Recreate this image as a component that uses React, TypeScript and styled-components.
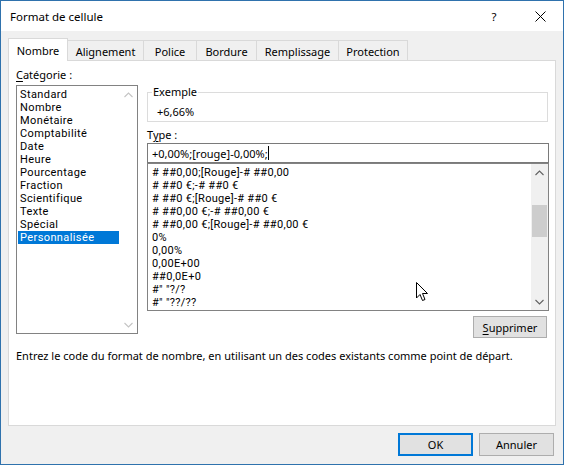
import React from 'react';
import styled, { createGlobalStyle } from 'styled-components';

const GlobalStyle = createGlobalStyle`
  html, body {
    margin: 0;
    padding: 0;
    background: #ffffff;
  }
  body {
    font-family: "Segoe UI", "Noto Sans", sans-serif;
    font-size: 11px;
    color: #000000;
  }
`;

const Window = styled.div`
  width: 564px;
  height: 465px;
  box-sizing: border-box;
  border: 1px solid #2f72ad;
  background: #f0f0f0;
  display: flex;
  flex-direction: column;
`;

const TitleBar = styled.div`
  height: 30px;
  background: #ffffff;
  display: flex;
  align-items: center;
  padding-left: 9px;
  font-size: 11.5px;
`;

const TitleText = styled.div`
  flex: 1;
`;

const TitleButton = styled.div<{ $w: number }>`
  width: ${p => p.$w}px;
  height: 30px;
  display: flex;
  align-items: center;
  justify-content: center;
  color: #000;
`;

const TabRow = styled.div`
  display: flex;
  align-items: flex-end;
  height: 22px;
  margin: 7px 0 0 7px;
`;

const Tab = styled.div<{ $w: number; $active?: boolean }>`
  position: relative;
  z-index: ${p => (p.$active ? 2 : 1)};
  box-sizing: border-box;
  width: ${p => p.$w}px;
  height: ${p => (p.$active ? 23 : 20)}px;
  margin-bottom: ${p => (p.$active ? -1 : 0)}px;
  margin-left: -1px;
  border: 1px solid #d9d9d9;
  border-bottom: none;
  background: ${p => (p.$active ? '#ffffff' : '#f0f0f0')};
  display: flex;
  align-items: center;
  justify-content: center;
  padding-top: ${p => (p.$active ? 0 : 1)}px;
  &:first-child {
    margin-left: 0;
  }
`;

const Panel = styled.div`
  box-sizing: border-box;
  height: 366px;
  margin: 0 7px 0 7px;
  background: #ffffff;
  border: 1px solid #d9d9d9;
  padding: 7px 0 0 7px;
`;

const Columns = styled.div`
  display: grid;
  grid-template-columns: 122px 402px;
  column-gap: 9px;
`;

const Column = styled.div`
  display: flex;
  flex-direction: column;
`;

const Label = styled.div<{ $top?: number }>`
  line-height: 14px;
  height: 14px;
  margin-top: ${p => p.$top ?? 0}px;
`;

const Key = styled.span`
  text-decoration: underline;
  text-underline-offset: 2px;
`;

const CategoryBox = styled.div`
  box-sizing: border-box;
  margin-top: 3px;
  height: 249px;
  border: 1px solid #828282;
  display: flex;
`;

const CategoryItems = styled.div`
  flex: 1;
  padding-top: 2px;
`;

const Item = styled.div<{ $selected?: boolean }>`
  height: 13px;
  line-height: 13px;
  margin: 0 1px;
  padding-left: 2px;
  font-family: Roboto, "Noto Sans", sans-serif;
  font-size: 11px;
  letter-spacing: 0.4px;
  white-space: nowrap;
  background: ${p => (p.$selected ? '#0078d7' : 'transparent')};
  color: ${p => (p.$selected ? '#ffffff' : '#000000')};
`;

const ScrollBar = styled.div<{ $disabled?: boolean }>`
  width: 17px;
  display: flex;
  flex-direction: column;
  background: ${p => (p.$disabled ? '#ffffff' : '#f0f0f0')};
`;

const ScrollButton = styled.div`
  height: 17px;
  display: flex;
  align-items: center;
  justify-content: center;
`;

const ScrollTrack = styled.div`
  flex: 1;
  padding: 0 1px;
`;

const ScrollThumb = styled.div<{ $top: number; $h: number }>`
  margin-top: ${p => p.$top}px;
  height: ${p => p.$h}px;
  background: #cdcdcd;
`;

const SampleGroup = styled.fieldset`
  margin: 17px 1px 0 0;
  padding: 0 0 0 4px;
  border: 1px solid #dcdcdc;
  min-width: 0;
`;

const Legend = styled.legend`
  padding: 0 1px;
  line-height: 14px;
`;

const Sample = styled.div`
  padding: 6px 0 2px 5px;
  line-height: 14px;
`;

const TypeInput = styled.div`
  box-sizing: border-box;
  margin-top: 1px;
  height: 20px;
  border: 1px solid #7a7a7a;
  padding-left: 4px;
  display: flex;
  align-items: center;
`;

const Caret = styled.span`
  display: inline-block;
  width: 1px;
  height: 14px;
  background: #000;
  vertical-align: middle;
`;

const FormatBox = styled.div`
  position: relative;
  box-sizing: border-box;
  height: 148px;
  border: 1px solid #828282;
  display: flex;
`;

const FormatItems = styled.div`
  flex: 1;
  padding: 2px 0 0 4px;
  overflow: hidden;
`;

const FormatLine = styled.div`
  height: 13px;
  line-height: 13px;
  font-family: Roboto, "Noto Sans", sans-serif;
  font-size: 11px;
  letter-spacing: 0.3px;
  white-space: nowrap;
`;

const Pointer = styled.svg`
  position: absolute;
  left: 268px;
  top: 118px;
`;

const ButtonRow = styled.div<{ $top: number; $right: number }>`
  display: flex;
  justify-content: flex-end;
  gap: 6px;
  margin-top: ${p => p.$top}px;
  margin-right: ${p => p.$right}px;
`;

const Button = styled.div<{ $w: number; $h: number; $default?: boolean }>`
  box-sizing: border-box;
  width: ${p => p.$w}px;
  height: ${p => p.$h}px;
  background: #e1e1e1;
  border: ${p => (p.$default ? '2px solid #0078d7' : '1px solid #adadad')};
  display: flex;
  align-items: center;
  justify-content: center;
`;

const Help = styled.div`
  margin-top: 11px;
  line-height: 14px;
`;

const Chevron: React.FC<{ down?: boolean; color: string }> = ({ down, color }) => (
  <svg width="9" height="6" viewBox="0 0 9 6">
    <path
      d={down ? 'M0.5 1 L4.5 5 L8.5 1' : 'M0.5 5 L4.5 1 L8.5 5'}
      fill="none"
      stroke={color}
      strokeWidth="1.1"
    />
  </svg>
);

const tabs = [
  { name: 'Nombre', w: 60, active: true },
  { name: 'Alignement', w: 77 },
  { name: 'Police', w: 54 },
  { name: 'Bordure', w: 61 },
  { name: 'Remplissage', w: 83 },
  { name: 'Protection', w: 70 },
];

const categories = [
  'Standard',
  'Nombre',
  'Monétaire',
  'Comptabilité',
  'Date',
  'Heure',
  'Pourcentage',
  'Fraction',
  'Scientifique',
  'Texte',
  'Spécial',
  'Personnalisée',
];

const formats = [
  '# ##0,00;[Rouge]-# ##0,00',
  '# ##0 €;-# ##0 €',
  '# ##0 €;[Rouge]-# ##0 €',
  '# ##0,00 €;-# ##0,00 €',
  '# ##0,00 €;[Rouge]-# ##0,00 €',
  '0%',
  '0,00%',
  '0,00E+00',
  '##0,0E+0',
  '#" "?/?',
  '#" "??/??',
];

const App: React.FC = () => {
  return (
    <>
      <GlobalStyle />
      <Window>
        <TitleBar>
          <TitleText>Format de cellule</TitleText>
          <TitleButton $w={46}>?</TitleButton>
          <TitleButton $w={46}>
            <svg width="11" height="11" viewBox="0 0 11 11">
              <path d="M0.5 0.5 L10.5 10.5 M10.5 0.5 L0.5 10.5" stroke="#000" strokeWidth="1" />
            </svg>
          </TitleButton>
        </TitleBar>

        <TabRow>
          {tabs.map(t => (
            <Tab key={t.name} $w={t.w} $active={t.active}>
              {t.name}
            </Tab>
          ))}
        </TabRow>

        <Panel>
          <Columns>
            <Column>
              <Label>
                <Key>C</Key>atégorie :
              </Label>
              <CategoryBox>
                <CategoryItems>
                  {categories.map(c => (
                    <Item key={c} $selected={c === 'Personnalisée'}>
                      {c}
                    </Item>
                  ))}
                </CategoryItems>
                <ScrollBar $disabled>
                  <ScrollButton>
                    <Chevron color="#c4c4c4" />
                  </ScrollButton>
                  <ScrollTrack />
                  <ScrollButton>
                    <Chevron down color="#c4c4c4" />
                  </ScrollButton>
                </ScrollBar>
              </CategoryBox>
            </Column>

            <Column>
              <SampleGroup>
                <Legend>Exemple</Legend>
                <Sample>+6,66%</Sample>
              </SampleGroup>
              <Label $top={6}>
                T<Key>y</Key>pe :
              </Label>
              <TypeInput>
                +0,00%;[rouge]-0,00%;
                <Caret />
              </TypeInput>
              <FormatBox>
                <FormatItems>
                  {formats.map(f => (
                    <FormatLine key={f}>{f}</FormatLine>
                  ))}
                </FormatItems>
                <ScrollBar>
                  <ScrollButton>
                    <Chevron color="#606060" />
                  </ScrollButton>
                  <ScrollTrack>
                    <ScrollThumb $top={24} $h={32} />
                  </ScrollTrack>
                  <ScrollButton>
                    <Chevron down color="#606060" />
                  </ScrollButton>
                </ScrollBar>
                <Pointer width="13" height="20" viewBox="0 0 13 20">
                  <path
                    d="M0.5 0.5 L0.5 16 L4 12.5 L6.5 18.5 L9 17.5 L6.5 11.5 L11.5 11.5 Z"
                    fill="#ffffff"
                    stroke="#000000"
                    strokeWidth="1"
                    strokeLinejoin="miter"
                  />
                </Pointer>
              </FormatBox>
              <ButtonRow $top={5} $right={2}>
                <Button $w={74} $h={22}>
                  <span>
                    <Key>S</Key>upprimer
                  </span>
                </Button>
              </ButtonRow>
            </Column>
          </Columns>
          <Help>
            Entrez le code du format de nombre, en utilisant un des codes existants comme point de départ.
          </Help>
        </Panel>

        <ButtonRow $top={7} $right={9}>
          <Button $w={75} $h={23} $default>
            OK
          </Button>
          <Button $w={75} $h={23}>
            Annuler
          </Button>
        </ButtonRow>
      </Window>
    </>
  );
};

export default App;
